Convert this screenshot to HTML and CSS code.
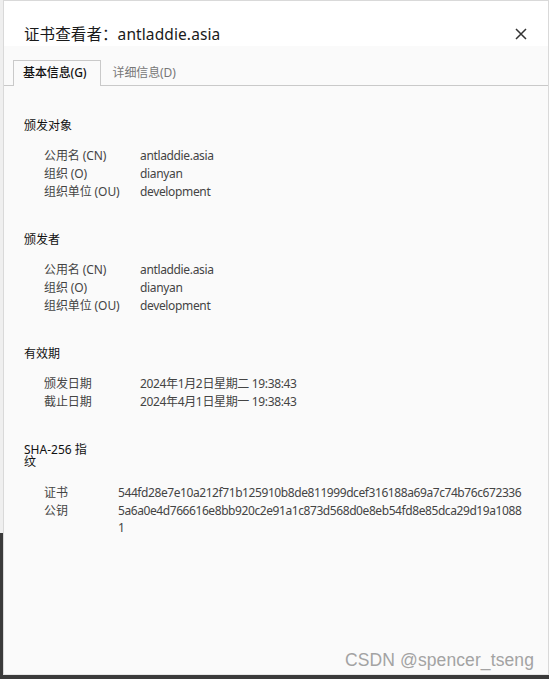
FILE: index.html
```html
<!DOCTYPE html>
<html lang="zh-CN">
<head>
<meta charset="utf-8">
<title>证书查看者</title>
<link rel="stylesheet" href="styles.css">
</head>
<body>
<div class="screen">
  <div class="backdrop">
    <div class="backdrop-top"></div>
    <div class="backdrop-bottom"></div>
  </div>
  <div class="dialog">
    <div class="header">
      <h1 class="title">证书查看者：antladdie.asia</h1>
      <button class="close" aria-label="关闭">
        <svg width="12" height="12" viewBox="0 0 12 12"><path d="M1 1 L11 11 M11 1 L1 11" stroke="#333" stroke-width="1.5" fill="none"/></svg>
      </button>
    </div>
    <div class="body">
      <div class="tabs">
        <div class="tab active">基本信息(G)</div>
        <div class="tab">详细信息(D)</div>
      </div>
      <div class="content">
        <section class="section">
          <h2 class="heading">颁发对象</h2>
          <div class="rows">
            <div class="label">公用名 (CN)</div><div class="value">antladdie.asia</div>
            <div class="label">组织 (O)</div><div class="value">dianyan</div>
            <div class="label">组织单位 (OU)</div><div class="value">development</div>
          </div>
        </section>
        <section class="section">
          <h2 class="heading">颁发者</h2>
          <div class="rows">
            <div class="label">公用名 (CN)</div><div class="value">antladdie.asia</div>
            <div class="label">组织 (O)</div><div class="value">dianyan</div>
            <div class="label">组织单位 (OU)</div><div class="value">development</div>
          </div>
        </section>
        <section class="section">
          <h2 class="heading">有效期</h2>
          <div class="rows">
            <div class="label">颁发日期</div><div class="value">2024年1月2日星期二 19:38:43</div>
            <div class="label">截止日期</div><div class="value">2024年4月1日星期一 19:38:43</div>
          </div>
        </section>
        <section class="section">
          <h2 class="heading heading-wrap">SHA-256 指纹</h2>
          <div class="rows rows-hash">
            <div class="label">证书</div><div class="value hash">544fd28e7e10a212f71b125910b8de811999dcef316188a69a7c74b76c672336</div>
            <div class="label">公钥</div><div class="value hash"><span class="hash-line">5a6a0e4d766616e8bb920c2e91a1c873d568d0e8eb54fd8e85dca29d19a1088</span><span class="hash-line">1</span></div>
          </div>
        </section>
      </div>
    </div>
    <div class="watermark">CSDN @spencer_tseng</div>
  </div>
</div>
</body>
</html>
```
FILE: styles.css
```css
html, body {
  margin: 0;
  padding: 0;
}
body {
  background: #3b3b3b;
  width: 549px;
  height: 679px;
  overflow: hidden;
  font-family: "Noto Sans", "Noto Sans CJK SC", sans-serif;
}
.screen {
  display: flex;
  height: 675px;
}
.backdrop {
  width: 3px;
  display: flex;
  flex-direction: column;
}
.backdrop-top {
  height: 533px;
  background: #efefef;
}
.backdrop-bottom {
  flex: 1;
  background: #3b3b3b;
}
.dialog {
  position: relative;
  flex: 1;
  display: flex;
  flex-direction: column;
  background: #fafafa;
  border: 1px solid #d9d9d9;
  border-bottom-color: #e6e6e6;
  box-sizing: border-box;
}
.header {
  background: #ffffff;
  height: 45px;
  display: flex;
  align-items: center;
  justify-content: space-between;
  padding: 0 21px 0 20px;
  box-sizing: border-box;
}
.title {
  margin: 20px 0 0 0;
  font-size: 15.5px;
  font-weight: normal;
  color: #1a1a1a;
  letter-spacing: 0.1px;
}
.close {
  border: 0;
  background: transparent;
  padding: 0;
  margin-top: 20px;
  width: 12px;
  height: 12px;
  display: flex;
}
.body {
  flex: 1;
  display: flex;
  flex-direction: column;
}
.tabs {
  display: flex;
  margin-top: 14px;
  padding-left: 9px;
  border-bottom: 1px solid #c9c9c9;
  height: 25px;
}
.tab {
  font-size: 12px;
  line-height: 24px;
  padding: 0 10px 0 11px;
  color: #777;
  border: 1px solid transparent;
  border-bottom: 0;
  letter-spacing: -0.1px;
}
.tab.active {
  color: #111;
  font-weight: 500;
  padding: 0 13px 0 9px;
  border-color: #c9c9c9;
  background: #fafafa;
  margin-bottom: -1px;
}
.content {
  padding: 34px 0 0 20px;
  display: flex;
  flex-direction: column;
  gap: 33px;
}
.heading {
  margin: 0 0 15px 0;
  font-size: 12px;
  line-height: 12px;
  font-weight: normal;
  color: #111;
  width: 68px;
}
.heading-wrap {
  margin-bottom: 16px;
}
.rows {
  display: grid;
  grid-template-columns: 96px auto;
  padding-left: 20px;
  font-size: 12px;
  line-height: 18px;
  color: #444;
}
.rows-hash {
  grid-template-columns: 74px auto;
  line-height: 17.5px;
}
.label, .value {
  white-space: nowrap;
}
.label {
  letter-spacing: -0.1px;
}
.value {
  letter-spacing: -0.35px;
}
.value.hash {
  letter-spacing: -0.42px;
}
.hash-line {
  display: block;
}
.watermark {
  position: absolute;
  right: 14px;
  bottom: 3px;
  font-family: "Liberation Sans", Arial, sans-serif;
  font-size: 17.5px;
  color: #a3a3a3;
  letter-spacing: 0.1px;
}
```
